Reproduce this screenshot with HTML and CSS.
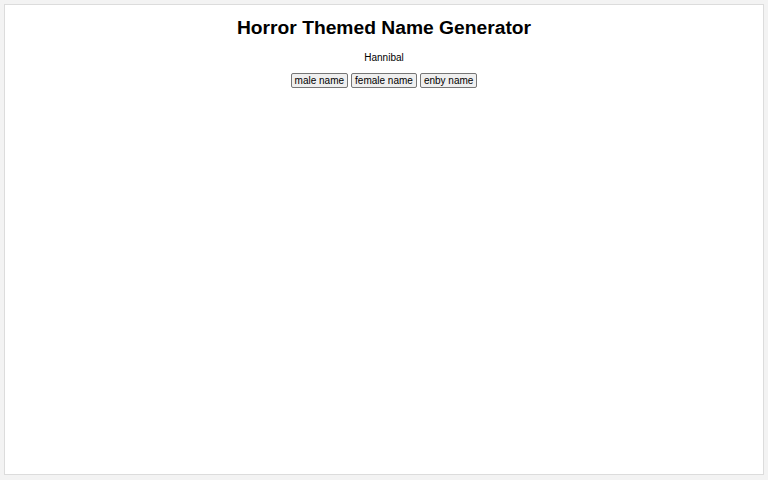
FILE: index.html
```html
<!DOCTYPE html>
<html lang="en">
<head>
  <meta charset="UTF-8">
  <meta name="viewport" content="width=device-width, initial-scale=1.0">
  <title>Horror Themed Name Generator</title>
  <link rel="stylesheet" href="styles.css">
</head>
<body>
  <div class="container">
    <h1>Horror Themed Name Generator</h1>
    <p class="name">Hannibal</p>
    <div class="buttons">
      <button>male name</button>
      <button>female name</button>
      <button>enby name</button>
    </div>
  </div>
</body>
</html>
```

FILE: styles.css
```css
body {
  margin: 0;
  padding: 4px 4px 5px 4px;
  background-color: #f3f3f3;
  font-family: "Liberation Sans", Arial, sans-serif;
}

.container {
  height: 469px;
  background-color: #fff;
  border: 1px solid #dcdcdc;
  text-align: center;
}

h1 {
  font-size: 19.25px;
  margin: 12px 0 0 0;
}

.name {
  font-size: 10px;
  margin: 13px 0 0 0;
}

.buttons {
  margin-top: 10px;
  display: flex;
  justify-content: center;
  gap: 3px;
}

button {
  font-family: "Liberation Sans", Arial, sans-serif;
  font-size: 10px;
  padding: 1px 3px;
  margin: 0;
  background-color: #efefef;
  border: 1px solid #767676;
  border-radius: 2px;
}
```
